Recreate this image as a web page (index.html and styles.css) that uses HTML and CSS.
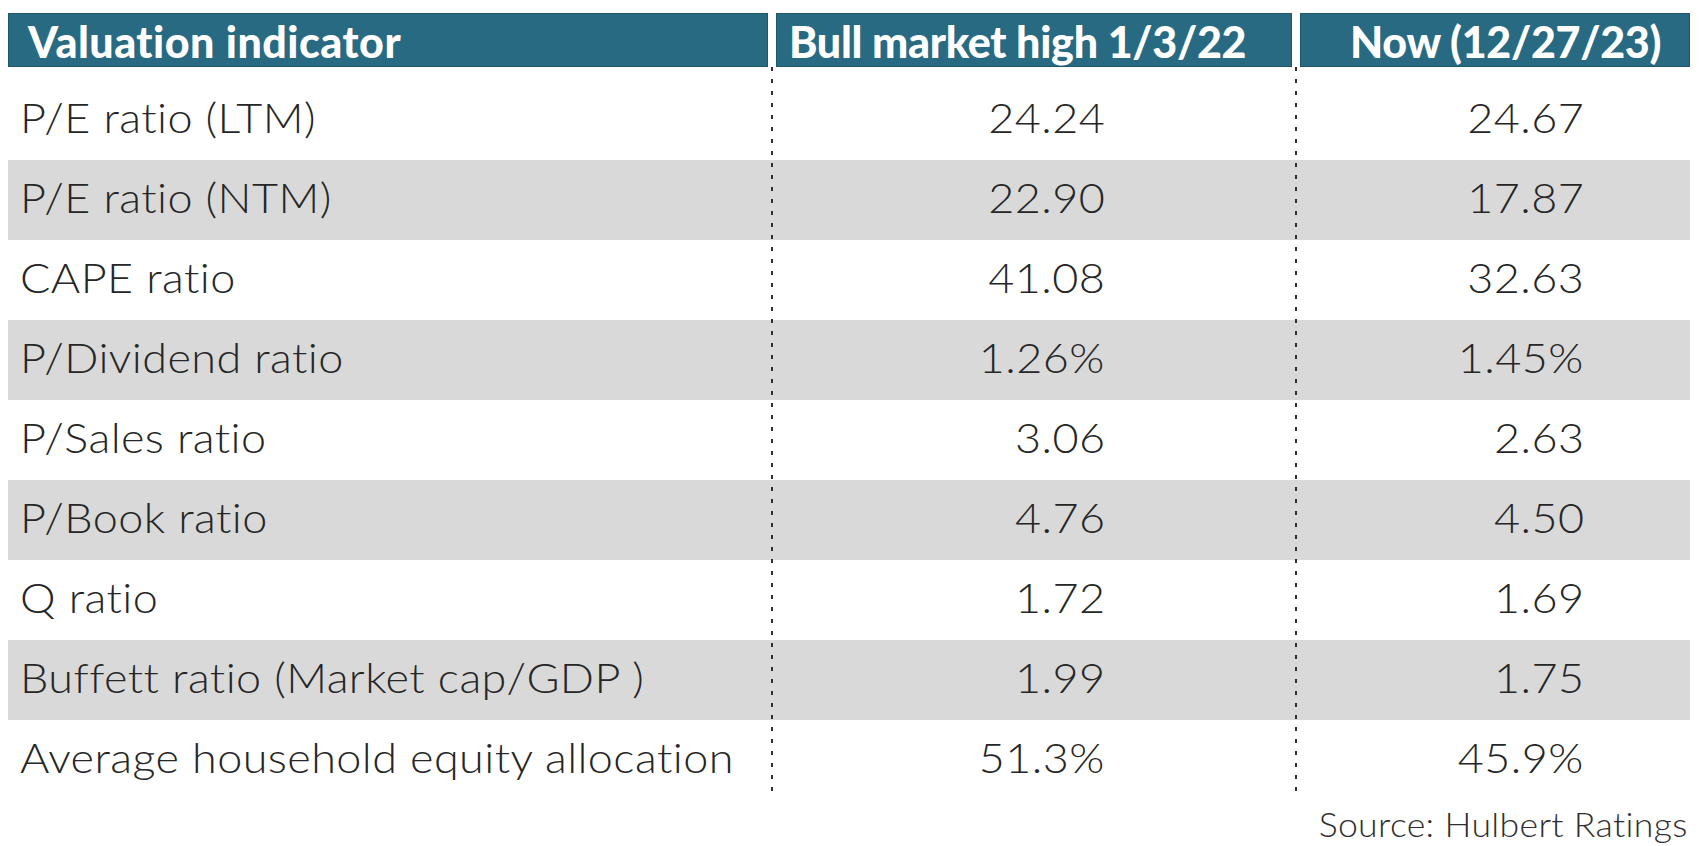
FILE: index.html
```html
<!DOCTYPE html>
<html>
<head>
<meta charset="utf-8">
<link rel="stylesheet" href="styles.css">
</head>
<body>
<div class="page">
  <div class="table">
    <div class="row head">
      <div class="hcell c1"><span class="htext">Valuation indicator</span></div>
      <div class="hcell c2"><span class="htext">Bull market high 1/3/22</span></div>
      <div class="hcell c3"><span class="htext">Now (12/27/23)</span></div>
    </div>
    <div class="tbody">
      <div class="row"><div class="label"><span class="t">P/E ratio (LTM)</span></div><div class="num n2"><span class="t">24.24</span></div><div class="num n3"><span class="t">24.67</span></div></div>
      <div class="row alt"><div class="label"><span class="t">P/E ratio (NTM)</span></div><div class="num n2"><span class="t">22.90</span></div><div class="num n3"><span class="t">17.87</span></div></div>
      <div class="row"><div class="label"><span class="t">CAPE ratio</span></div><div class="num n2"><span class="t">41.08</span></div><div class="num n3"><span class="t">32.63</span></div></div>
      <div class="row alt"><div class="label"><span class="t">P/Dividend ratio</span></div><div class="num n2"><span class="t">1.26%</span></div><div class="num n3"><span class="t">1.45%</span></div></div>
      <div class="row"><div class="label"><span class="t">P/Sales ratio</span></div><div class="num n2"><span class="t">3.06</span></div><div class="num n3"><span class="t">2.63</span></div></div>
      <div class="row alt"><div class="label"><span class="t">P/Book ratio</span></div><div class="num n2"><span class="t">4.76</span></div><div class="num n3"><span class="t">4.50</span></div></div>
      <div class="row"><div class="label"><span class="t">Q ratio</span></div><div class="num n2"><span class="t">1.72</span></div><div class="num n3"><span class="t">1.69</span></div></div>
      <div class="row alt"><div class="label"><span class="t">Buffett ratio (Market cap/GDP )</span></div><div class="num n2"><span class="t">1.99</span></div><div class="num n3"><span class="t">1.75</span></div></div>
      <div class="row"><div class="label"><span class="t">Average household equity allocation</span></div><div class="num n2"><span class="t">51.3%</span></div><div class="num n3"><span class="t">45.9%</span></div></div>
      <div class="vline v1"></div>
      <div class="vline v2"></div>
    </div>
  </div>
  <div class="source"><span class="st">Source: Hulbert Ratings</span></div>
</div>
</body>
</html>
```

FILE: styles.css
```css
html, body {
  margin: 0;
  padding: 0;
  background: #ffffff;
}

.page {
  width: 1700px;
  height: 846px;
  padding: 13px 10px 0 8px;
  box-sizing: border-box;
  font-family: Lato, "Open Sans", sans-serif;
  color: #262626;
}

.table {
  width: 1682px;
}

.row {
  display: grid;
  grid-template-columns: 760px 516px 390px;
  column-gap: 8px;
  height: 80px;
  align-items: center;
}

.head {
  height: 54px;
}

.hcell {
  height: 54px;
  background: #296a83;
  box-shadow: inset 0 0 0 1px #1f5669;
  display: flex;
  align-items: center;
  color: #ffffff;
  font-weight: 900;
  font-size: 43px;
  white-space: nowrap;
  overflow: hidden;
}

.htext {
  display: inline-block;
  line-height: 1;
  letter-spacing: -0.3px;
  position: relative;
  top: 1px;
}

.hcell.c1 { padding-left: 20px; }
.hcell.c1 .htext { letter-spacing: 0.5px; }
.hcell.c2 { padding-left: 13px; }
.hcell.c3 { padding-left: 50px; }

.tbody {
  position: relative;
  padding-top: 13px;
}

.row.alt {
  background: #d9d9d9;
}

.label,
.num {
  font-size: 42px;
  font-weight: 300;
  letter-spacing: 0.4px;
  white-space: nowrap;
  position: relative;
  top: -3px;
}

.t {
  display: inline-block;
  transform: scaleX(1.07);
}

.label {
  padding-left: 12px;
}

.label .t {
  transform-origin: left center;
}

.num {
  text-align: right;
}

.num .t {
  transform-origin: right center;
}

.n2 { padding-right: 187px; }
.n3 { padding-right: 106px; }

.vline {
  position: absolute;
  top: 0;
  bottom: 7px;
  width: 2px;
  background: repeating-linear-gradient(to bottom, #2f2f2f 0 4px, transparent 4px 12px);
}

.v1 { left: 763px; }
.v2 { left: 1287px; }

.source {
  text-align: right;
  font-size: 33px;
  font-weight: 300;
  letter-spacing: 0.3px;
  color: #2e2e2e;
  padding-right: 2px;
  margin-top: 4px;
}

.st {
  display: inline-block;
  transform: scaleX(1.08);
  transform-origin: right center;
}
```
